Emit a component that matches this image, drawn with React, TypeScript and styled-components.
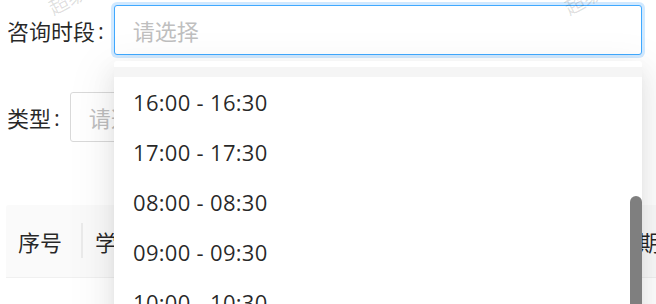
import React from "react";
import styled, { createGlobalStyle } from "styled-components";

const GlobalStyle = createGlobalStyle`
  html, body {
    margin: 0;
    padding: 0;
    background: #ffffff;
    overflow: hidden;
  }
  body {
    font-family: "Open Sans", "Noto Sans CJK SC", sans-serif;
    color: rgba(0, 0, 0, 0.85);
  }
`;

const Page = styled.div`
  position: relative;
  width: 656px;
  height: 304px;
  overflow: hidden;
  padding: 5px 0 0 6px;
  box-sizing: border-box;
  font-family: "Open Sans", "Noto Sans CJK SC", sans-serif;
`;

const Form = styled.div`
  display: flex;
  flex-direction: column;
  gap: 37px;
  width: 636px;
  padding-left: 1px;
  box-sizing: border-box;
`;

const FormItem = styled.div`
  display: flex;
  align-items: center;
  height: 50px;
`;

const Label = styled.label`
  display: flex;
  align-items: center;
  font-size: 22px;
  color: rgba(0, 0, 0, 0.85);
  white-space: nowrap;
  margin-right: 10px;
  font-family: "Noto Sans CJK SC", sans-serif;
`;

const Colon = styled.span`
  font-family: "Open Sans", sans-serif;
  margin-left: 3px;
`;

const SelectBox = styled.div<{ $focused?: boolean }>`
  flex: 1;
  height: 50px;
  box-sizing: border-box;
  border: 1px solid ${(p) => (p.$focused ? "#40a9ff" : "#d9d9d9")};
  border-radius: 3px;
  box-shadow: ${(p) => (p.$focused ? "0 0 0 3px rgba(24, 144, 255, 0.2)" : "none")};
  background: #fff;
  display: flex;
  align-items: center;
  padding-left: 18px;
`;

const Placeholder = styled.span`
  font-size: 22px;
  color: #bfbfbf;
  font-family: "Noto Sans CJK SC", sans-serif;
`;

const Table = styled.div`
  margin-top: 63px;
  width: 704px;
`;

const HeaderRow = styled.div`
  display: flex;
  height: 72px;
  background: #fafafa;
  border-bottom: 1px solid #f0f0f0;
  border-radius: 3px 3px 0 0;
`;

const HeaderCell = styled.div<{ $width?: number; $grow?: boolean; $divider?: boolean }>`
  position: relative;
  display: flex;
  align-items: center;
  box-sizing: border-box;
  padding-left: 12px;
  font-size: 22px;
  font-family: "Noto Sans CJK SC", sans-serif;
  color: rgba(0, 0, 0, 0.85);
  white-space: nowrap;
  ${(p) => (p.$width ? `width: ${p.$width}px;` : "")}
  ${(p) => (p.$grow ? "flex: 1;" : "")}
  ${(p) =>
    p.$divider
      ? `&::after {
    content: "";
    position: absolute;
    right: 0;
    top: 18px;
    height: 35px;
    width: 2px;
    background: rgba(0, 0, 0, 0.06);
  }`
      : ""}
`;

const Dropdown = styled.div`
  position: absolute;
  left: 114px;
  top: 61px;
  width: 528px;
  height: 270px;
  background: #fff;
  border-radius: 3px;
  box-shadow: 0 5px 9px -6px rgba(0, 0, 0, 0.12), 0 9px 25px 0 rgba(0, 0, 0, 0.08),
    0 14px 44px 12px rgba(0, 0, 0, 0.05);
  padding-top: 6px;
  box-sizing: border-box;
  z-index: 10;
`;

const Viewport = styled.div`
  position: relative;
  height: 100%;
  overflow: hidden;
`;

const OptionList = styled.div`
  margin-top: -40px;
`;

const Option = styled.div<{ $active?: boolean }>`
  height: 50px;
  display: flex;
  align-items: center;
  padding: 0 19px;
  font-size: 22px;
  letter-spacing: 0.3px;
  color: rgba(0, 0, 0, 0.85);
  background: ${(p) => (p.$active ? "#f5f5f5" : "transparent")};
  font-family: "Open Sans", "Noto Sans CJK SC", sans-serif;
`;

const ScrollThumb = styled.div`
  position: absolute;
  right: 0;
  top: 129px;
  width: 12px;
  height: 220px;
  border-radius: 6px;
  background: rgba(0, 0, 0, 0.5);
`;

const Watermark = styled.div<{ $left: number }>`
  position: absolute;
  left: ${(p) => p.$left}px;
  top: -8px;
  font-size: 20px;
  font-family: "Noto Sans CJK SC", sans-serif;
  color: rgba(0, 0, 0, 0.13);
  transform-origin: left bottom;
  transform: rotate(-28deg);
  white-space: nowrap;
  pointer-events: none;
  z-index: 20;
`;

const options = [
  "15:00 - 15:30",
  "16:00 - 16:30",
  "17:00 - 17:30",
  "08:00 - 08:30",
  "09:00 - 09:30",
  "10:00 - 10:30",
];

export default function App() {
  return (
    <>
      <GlobalStyle />
      <Page>
        <Form>
          <FormItem>
            <Label>
              咨询时段<Colon>:</Colon>
            </Label>
            <SelectBox $focused>
              <Placeholder>请选择</Placeholder>
            </SelectBox>
          </FormItem>
          <FormItem>
            <Label>
              类型<Colon>:</Colon>
            </Label>
            <SelectBox>
              <Placeholder>请选择</Placeholder>
            </SelectBox>
          </FormItem>
        </Form>
        <Table>
          <HeaderRow>
            <HeaderCell $width={77} $divider>
              序号
            </HeaderCell>
            <HeaderCell $width={200} $divider>
              学号
            </HeaderCell>
            <HeaderCell $grow $divider>
              学生姓名
            </HeaderCell>
            <HeaderCell $width={150}>咨询日期</HeaderCell>
          </HeaderRow>
        </Table>
        <Dropdown>
          <Viewport>
            <OptionList>
              {options.map((o, i) => (
                <Option key={o} $active={i === 0}>
                  {o}
                </Option>
              ))}
            </OptionList>
            <ScrollThumb />
          </Viewport>
        </Dropdown>
        <Watermark $left={56}>超级管理员</Watermark>
        <Watermark $left={572}>超级管理员</Watermark>
      </Page>
    </>
  );
}
